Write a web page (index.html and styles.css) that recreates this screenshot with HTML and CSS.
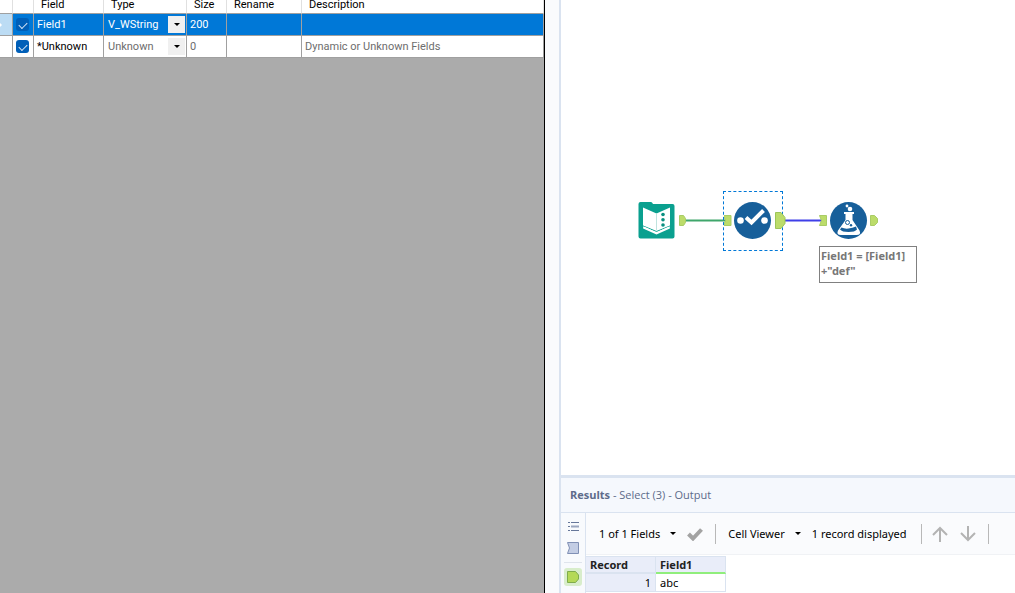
FILE: index.html
```html
<!DOCTYPE html>
<html lang="en">
<head>
    <meta charset="UTF-8">
    <meta name="viewport" content="width=device-width, initial-scale=1.0">
    <title>Select (3) - Output</title>
    <link rel="stylesheet" href="styles.css">
</head>
<body>
    <div class="app">
        <section class="config">
            <table class="fields">
                <colgroup>
                    <col class="col-marker">
                    <col class="col-check">
                    <col class="col-field">
                    <col class="col-type">
                    <col class="col-size">
                    <col class="col-rename">
                    <col>
                </colgroup>
                <thead>
                    <tr>
                        <th></th>
                        <th></th>
                        <th>Field</th>
                        <th>Type</th>
                        <th>Size</th>
                        <th>Rename</th>
                        <th>Description</th>
                    </tr>
                </thead>
                <tbody>
                    <tr class="selected">
                        <td class="marker"><svg width="12" height="10" viewBox="0 0 12 10"><path d="M0 3l2 2-2 2z" fill="#fff"/></svg></td>
                        <td class="check"><input type="checkbox" aria-label="Include Field1" checked></td>
                        <td>Field1</td>
                        <td class="type">
                            <div class="type-box">
                                <select aria-label="Type of Field1"><option>V_WString</option></select>
                            </div>
                        </td>
                        <td>200</td>
                        <td></td>
                        <td></td>
                    </tr>
                    <tr class="unknown">
                        <td class="marker"></td>
                        <td class="check"><input type="checkbox" aria-label="Include unknown fields" checked></td>
                        <td class="name">*Unknown</td>
                        <td class="type">
                            <div class="type-box">
                                <select aria-label="Type of unknown fields"><option>Unknown</option></select>
                            </div>
                        </td>
                        <td>0</td>
                        <td></td>
                        <td>Dynamic or Unknown Fields</td>
                    </tr>
                </tbody>
            </table>
        </section>

        <main class="work">
            <section class="canvas">
                <!-- connections -->
                <svg class="wires" width="330" height="60" viewBox="0 0 330 60">
                    <path d="M46 29.500h46" stroke="#3fa66b" stroke-width="2"/>
                    <path d="M146 29.500h40" stroke="#3f3fe8" stroke-width="2"/>
                </svg>

                <div class="tool tool-input">
                    <svg width="50" height="40" viewBox="0 0 50 40">
                        <path d="M2.500 1h10.500q1 0 2 2h19.500q2 0 2 2v30.500q0 2-2 2H2.500q-2 0-2-2V3q0-2 2-2z" fill="#0aa08f"/>
                        <path d="M5 6.500l13.500 6 13.500-6v20l-13.500 6-13.500-6z" fill="#fff"/>
                        <path d="M18.500 12.500v17" stroke="#bfe3de" stroke-width="1"/>
                        <path d="M4 24.500l14.500 6 14.500-6" fill="none" stroke="#0aa08f" stroke-width="1"/>
                        <path d="M5.500 26.500l13 6 13-6" fill="none" stroke="#fff" stroke-width="2"/>
                        <circle cx="25" cy="13.500" r="1.800" fill="#0a8f80"/>
                        <circle cx="25" cy="18.800" r="1.800" fill="#0a8f80"/>
                        <circle cx="25" cy="24" r="1.800" fill="#0a8f80"/>
                        <path d="M41.500 14.500h4l2 3v4l-2 3h-4z" fill="#bcdc6a" stroke="#a9cc66"/>
                    </svg>
                </div>

                <div class="tool tool-select">
                    <svg width="64" height="58" viewBox="0 0 64 58">
                        <path d="M-.5 23.500h7.500v10h-7.500l2-5z" fill="#bcdc6a" stroke="#a9cc66"/>
                        <circle cx="28.500" cy="28.500" r="18.500" fill="#175f9a"/>
                        <circle cx="16.500" cy="28.500" r="3.300" fill="#fff"/>
                        <circle cx="40.500" cy="28.500" r="3.300" fill="#fff"/>
                        <path d="M22 25.500l5.500 5 12-12" fill="none" stroke="#fff" stroke-width="4"/>
                        <path d="M51.500 20.500h5.500l4 5v6l-4 5h-5.500z" fill="#bcdc6a" stroke="#9cc558"/>
                    </svg>
                </div>

                <div class="tool tool-formula">
                    <svg width="60" height="40" viewBox="0 0 60 40">
                        <path d="M.5 14.500h7v10h-7l2-5z" fill="#bcdc6a" stroke="#a9cc66"/>
                        <circle cx="29.500" cy="19.500" r="18.500" fill="#175f9a"/>
                        <circle cx="28" cy="5" r="1.400" fill="#fff"/>
                        <circle cx="31" cy="8" r="2.300" fill="#fff"/>
                        <path d="M25 11h10v2h-1.500v6l7 10.500q2 4.500-3 4.500H22q-5 0-3-4.500l7.500-10.500v-6H25z" fill="#fff"/>
                        <path d="M22.500 26.500q3 1.500 7 1t7.500-2l1 3q-2 2.500-8.500 2.500t-8.500-2.500z" fill="#175f9a"/>
                        <circle cx="28.500" cy="21.500" r="2" fill="#fff" stroke="#175f9a"/>
                        <circle cx="32" cy="24.200" r="1.200" fill="#175f9a"/>
                        <path d="M51.500 14.500h4l3 3v4l-3 3h-4z" fill="#bcdc6a" stroke="#a9cc66"/>
                    </svg>
                </div>
                <div class="note">Field1 = [Field1]<br>+"def"</div>
            </section>

            <section class="results">
                <header class="results-title"><strong>Results</strong> - Select (3) - Output</header>
                <div class="results-body">
                    <nav class="side">
                        <button type="button" aria-label="Messages">
                            <svg width="12" height="12" viewBox="0 0 12 12" stroke="#66779a">
                                <path d="M1 2.500h2M1 6.500h2M1 10.500h2M4 2.500h8M4 10.500h8"/>
                                <path d="M4 6.500h8" stroke="#9aa6bf" stroke-width="2"/>
                            </svg>
                        </button>
                        <button type="button" aria-label="Input anchor">
                            <svg width="12" height="12" viewBox="0 0 12 12"><path d="M.5.5h11v11H.5l2-5.500z" fill="#c3cde4" stroke="#8090b5"/></svg>
                        </button>
                        <hr>
                        <button type="button" class="active" aria-label="Output anchor">
                            <svg width="14" height="12" viewBox="0 0 14 12"><path d="M1.500.5h8l3 3.500v4l-3 3.500h-8z" fill="#b4d957" stroke="#7fac4c"/></svg>
                        </button>
                    </nav>
                    <div class="data">
                        <div class="toolbar">
                            <button type="button" class="menu fields-menu">1 of 1 Fields</button>
                            <button type="button" class="icon apply" aria-label="Apply">
                                <svg width="16" height="14" viewBox="0 0 16 14"><path d="M1.500 7l4.500 4.500 8.500-9" fill="none" stroke="#a3a3a3" stroke-width="4"/></svg>
                            </button>
                            <span class="divider"></span>
                            <button type="button" class="menu viewer-menu">Cell Viewer</button>
                            <span class="count">1 record displayed</span>
                            <span class="divider"></span>
                            <button type="button" class="icon up" aria-label="Previous">
                                <svg width="16" height="16" viewBox="0 0 16 16"><path d="M8 16V2M1 9l7-7 7 7" fill="none" stroke="#b3b3b3" stroke-width="2"/></svg>
                            </button>
                            <button type="button" class="icon down" aria-label="Next">
                                <svg width="16" height="16" viewBox="0 0 16 16"><path d="M8 0v14M1 7l7 7 7-7" fill="none" stroke="#b3b3b3" stroke-width="2"/></svg>
                            </button>
                            <span class="divider"></span>
                        </div>
                        <table class="records">
                            <thead>
                                <tr><th>Record</th><th class="ok">Field1</th></tr>
                            </thead>
                            <tbody>
                                <tr><td class="num">1</td><td>abc</td></tr>
                            </tbody>
                        </table>
                    </div>
                </div>
            </section>
        </main>
    </div>
</body>
</html>
```
FILE: styles.css
```css
* {
    box-sizing: border-box;
}
body {
    margin: 0;
    font-family: "Noto Sans", "Open Sans", sans-serif;
    font-size: 11px;
    color: #000;
    background-color: #fff;
}
button {
    border: none;
    padding: 0;
    background: none;
    font: inherit;
    color: inherit;
}
svg {
    display: block;
}
.app {
    display: grid;
    grid-template-columns: 109fr 94fr;
    height: 100vh;
    overflow: hidden;
}

/* field configuration */
.config {
    background-color: #ababab;
    border-right: 1px solid #000;
    overflow: hidden;
}
.fields {
    width: 100%;
    margin-top: -8px;
    table-layout: fixed;
    border-collapse: separate;
    border-spacing: 0;
    font-family: Roboto, "Liberation Sans", sans-serif;
    font-size: 11px;
    line-height: 14px;
}
.col-marker {
    width: 13px;
}
.col-check {
    width: 21px;
}
.col-field {
    width: 70px;
}
.col-type {
    width: 83px;
}
.col-size {
    width: 40px;
}
.col-rename {
    width: 75px;
}
.fields th {
    height: 22px;
    padding: 0 0 1px 7px;
    background-color: #fff;
    border-right: 1px solid #e0e0e0;
    border-bottom: 1px solid #a0a0a0;
    font-weight: normal;
    text-align: left;
    vertical-align: bottom;
}
.fields td {
    height: 22px;
    padding: 1px 3px 0;
    background-color: #fff;
    border-right: 1px solid #a0a0a0;
    border-bottom: 1px solid #a0a0a0;
}
.fields .selected td {
    background-color: #0078d7;
    color: #fff;
}
.fields .unknown td {
    color: #6d6d6d;
}
.fields .unknown .name {
    color: #000;
}
.fields .marker,
.fields .check,
.fields .type {
    padding: 0;
}
.fields .selected .marker {
    background-color: #bcdcf4;
}
.check input {
    appearance: none;
    display: block;
    position: relative;
    width: 13px;
    height: 13px;
    margin: 0 3px;
    border-radius: 3px;
    background-color: #005fb8;
}
.check input::after {
    content: "";
    position: absolute;
    left: 3px;
    top: 4px;
    width: 7px;
    height: 4px;
    border-left: 1px solid #d5e4f4;
    border-bottom: 1px solid #d5e4f4;
    transform: rotate(-45deg);
}
.type-box {
    display: flex;
    position: relative;
    height: 21px;
}
.type-box select {
    appearance: none;
    flex: 1;
    border: none;
    padding: 1px 4px 0;
    background: linear-gradient(#f0f0f0, #f0f0f0) right 1px center / 17px 17px no-repeat;
    font: inherit;
    color: inherit;
}
.type-box::after,
.menu::after {
    content: "";
    border: 3px solid transparent;
    border-top-color: #000;
    border-bottom: none;
}
.type-box::after {
    position: absolute;
    right: 6px;
    top: 9px;
}

/* workflow */
.work {
    display: flex;
    flex-direction: column;
    min-width: 0;
    margin-left: 14px;
    border-left: 2px solid #dae3f0;
    box-shadow: -14px 0 #fafbfd;
}
.canvas {
    position: relative;
    flex: 1;
    background-color: #fff;
}
.wires,
.tool,
.note {
    position: absolute;
}
.wires {
    left: 77px;
    top: 191px;
}
.tool-input {
    left: 77px;
    top: 201px;
}
.tool-select {
    left: 162px;
    top: 191px;
    width: 60px;
    height: 60px;
    border: 1px dashed #0078d7;
}
.tool-formula {
    left: 258px;
    top: 201px;
}
.note {
    left: 258px;
    top: 246px;
    width: 98px;
    padding: 1px 1px 4px;
    border: 1px solid #808080;
    background-color: #fff;
    color: #777;
    font-size: 11px;
    font-weight: bold;
    line-height: 15px;
}

/* results */
.results {
    border-top: 3px solid #dae3f0;
}
.results-title {
    height: 35px;
    padding-left: 9px;
    border-bottom: 1px solid #dae3f0;
    background-color: #f5f8fd;
    color: #5d6b8a;
    font-family: "Open Sans", sans-serif;
    font-size: 11px;
    line-height: 34px;
}
.results-body {
    display: flex;
    height: 80px;
}
.side {
    display: flex;
    flex-direction: column;
    align-items: center;
    gap: 4px;
    width: 25px;
    padding-top: 4px;
    border-right: 1px solid #dae3f0;
    background-color: #f8fafd;
}
.side button {
    display: flex;
    align-items: center;
    justify-content: center;
    width: 18px;
    height: 18px;
    border-radius: 3px;
}
.side .active {
    background-color: #d8edcb;
}
.side hr {
    width: 18px;
    margin: 1px 0;
    border: none;
    border-top: 1px solid #dfe4ec;
}
.data {
    flex: 1;
    min-width: 0;
}
.toolbar {
    display: flex;
    align-items: center;
    height: 42px;
    padding-left: 13px;
    border-bottom: 1px solid #f0f2f5;
    background-color: #fafbfd;
    white-space: nowrap;
}
.menu {
    display: flex;
    align-items: center;
    gap: 10px;
}
.apply {
    margin: 0 12px 0 11px;
}
.divider {
    width: 1px;
    height: 20px;
    background-color: #b8b8b8;
}
.viewer-menu {
    margin: 0 11px 0 12px;
}
.count {
    margin-right: 14px;
}
.up {
    margin: 0 12px 0 10px;
}
.down {
    margin-right: 12px;
}
.records {
    width: 140px;
    margin-top: 1px;
    table-layout: fixed;
    border-collapse: separate;
    border-spacing: 0;
    font-size: 11px;
    line-height: 15px;
}
.records th,
.records td {
    height: 18px;
    padding: 0 4px;
    border-right: 1px solid #dae3f0;
    border-bottom: 1px solid #dae3f0;
    text-align: left;
}
.records th {
    border-top: 1px solid #dae3f0;
    border-bottom-width: 2px;
    background-color: #e9edf9;
    color: #222;
}
.records .ok {
    border-bottom-color: #90ee7c;
}
.records .num {
    background-color: #e9edf9;
    text-align: right;
}
```
